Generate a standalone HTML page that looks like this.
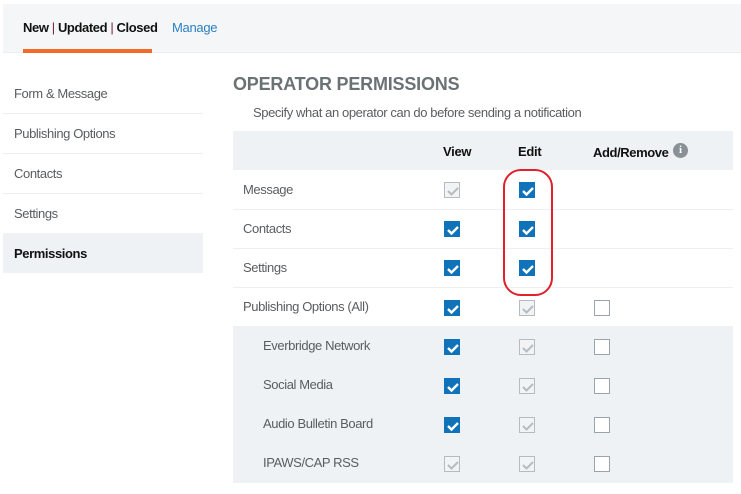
<!DOCTYPE html>
<html><head><style>
*{margin:0;padding:0;box-sizing:border-box}
body{width:741px;height:494px;background:#fff;font-family:"Liberation Sans",sans-serif;position:relative;overflow:hidden;color:#555}
.a{position:absolute;white-space:nowrap}
.t{font-size:13px;letter-spacing:-0.4px;color:#5a5d60}
.cb{position:absolute;width:16px;height:16px;border:1px solid #9aa4ab;background:#fff}
.cb.on{background:#1072b8;border-color:#1072b8}
.cb.dis{background:#f1f3f4;border-color:#b5bcc1}
.cb svg{position:absolute;left:2px;top:3px}
.sep{position:absolute;height:1px;background:#edf0f2}
</style></head><body>
<div class="a" style="left:3px;top:4px;width:738px;height:49px;background:#f5f6f7;border-bottom:1px solid #eceeef"></div>
<div class="a" style="left:23px;top:20px;font-size:13px;font-weight:bold;color:#111;letter-spacing:-0.4px">New <span style="font-weight:normal;color:#7a2040">|</span> Updated <span style="font-weight:normal;color:#7a2040">|</span> Closed</div>
<div class="a" style="left:23px;top:49px;width:129px;height:4px;background:#f26b2a"></div>
<div class="a" style="left:172px;top:20px;font-size:13px;color:#2a7fc0;letter-spacing:-0.3px">Manage</div>

<div class="a t" style="left:14px;top:86px">Form &amp; Message</div>
<div class="sep" style="left:3px;top:113px;width:200px"></div>
<div class="a t" style="left:14px;top:126px">Publishing Options</div>
<div class="sep" style="left:3px;top:153px;width:200px"></div>
<div class="a t" style="left:14px;top:166px">Contacts</div>
<div class="sep" style="left:3px;top:193px;width:200px"></div>
<div class="a t" style="left:14px;top:206px">Settings</div>
<div class="a" style="left:3px;top:233px;width:200px;height:40px;background:#eef2f5"></div>
<div class="a" style="left:14px;top:246px;font-size:13px;font-weight:bold;color:#111;letter-spacing:-0.4px">Permissions</div>

<div class="a" style="left:233px;top:74px;font-size:18px;font-weight:bold;color:#6b7275;letter-spacing:-0.2px">OPERATOR PERMISSIONS</div>
<div class="a t" style="left:253px;top:105px">Specify what an operator can do before sending a notification</div>

<div class="a" style="left:233px;top:131px;width:500px;height:39px;background:#eef2f5"></div>
<div class="a" style="left:443px;top:144px;font-size:13px;font-weight:bold;color:#111;letter-spacing:-0.3px">View</div>
<div class="a" style="left:518px;top:144px;font-size:13px;font-weight:bold;color:#111;letter-spacing:-0.3px">Edit</div>
<div class="a" style="left:593px;top:145px;font-size:13px;font-weight:bold;color:#111;letter-spacing:-0.4px">Add/Remove</div>
<div class="a" style="left:673px;top:143px;width:15px;height:15px;border-radius:50%;background:#8a9196;color:#fff;font-size:11px;font-weight:bold;text-align:center;line-height:15px;font-family:'Liberation Serif',serif">i</div>

<div class="sep" style="left:233px;top:209px;width:500px"></div>
<div class="sep" style="left:233px;top:248px;width:500px"></div>
<div class="sep" style="left:233px;top:287px;width:500px"></div>
<div class="a" style="left:233px;top:326px;width:500px;height:157px;background:#eef2f5"></div>

<div class="a t" style="left:243px;top:182px">Message</div>
<div class="a t" style="left:243px;top:221px">Contacts</div>
<div class="a t" style="left:243px;top:260px">Settings</div>
<div class="a t" style="left:243px;top:299px">Publishing Options (All)</div>
<div class="a t" style="left:263px;top:338px">Everbridge Network</div>
<div class="a t" style="left:263px;top:377px">Social Media</div>
<div class="a t" style="left:263px;top:416px">Audio Bulletin Board</div>
<div class="a t" style="left:263px;top:455px">IPAWS/CAP RSS</div>

<svg width="0" height="0" style="position:absolute"><defs>
<path id="w" d="M1 5 L4.5 8.5 L11 2" fill="none" stroke="#fff" stroke-width="2.4"/>
<path id="g" d="M1 5 L4.5 8.5 L11 2" fill="none" stroke="#b5bcc1" stroke-width="2"/>
</defs></svg>

<!-- row y: 182,221,260,299,338,377,416,455 -->
<div class="cb dis" style="left:444px;top:182px"><svg width="12" height="11"><use href="#g"/></svg></div>
<div class="cb on" style="left:519px;top:182px"><svg width="12" height="11"><use href="#w"/></svg></div>
<div class="cb on" style="left:444px;top:221px"><svg width="12" height="11"><use href="#w"/></svg></div>
<div class="cb on" style="left:519px;top:221px"><svg width="12" height="11"><use href="#w"/></svg></div>
<div class="cb on" style="left:444px;top:260px"><svg width="12" height="11"><use href="#w"/></svg></div>
<div class="cb on" style="left:519px;top:260px"><svg width="12" height="11"><use href="#w"/></svg></div>
<div class="cb on" style="left:444px;top:300px"><svg width="12" height="11"><use href="#w"/></svg></div>
<div class="cb dis" style="left:519px;top:300px"><svg width="12" height="11"><use href="#g"/></svg></div>
<div class="cb" style="left:594px;top:300px"></div>
<div class="cb on" style="left:444px;top:339px"><svg width="12" height="11"><use href="#w"/></svg></div>
<div class="cb dis" style="left:519px;top:339px"><svg width="12" height="11"><use href="#g"/></svg></div>
<div class="cb" style="left:594px;top:339px"></div>
<div class="cb on" style="left:444px;top:378px"><svg width="12" height="11"><use href="#w"/></svg></div>
<div class="cb dis" style="left:519px;top:378px"><svg width="12" height="11"><use href="#g"/></svg></div>
<div class="cb" style="left:594px;top:378px"></div>
<div class="cb on" style="left:444px;top:417px"><svg width="12" height="11"><use href="#w"/></svg></div>
<div class="cb dis" style="left:519px;top:417px"><svg width="12" height="11"><use href="#g"/></svg></div>
<div class="cb" style="left:594px;top:417px"></div>
<div class="cb dis" style="left:444px;top:456px"><svg width="12" height="11"><use href="#g"/></svg></div>
<div class="cb dis" style="left:519px;top:456px"><svg width="12" height="11"><use href="#g"/></svg></div>
<div class="cb" style="left:594px;top:456px"></div>

<div class="a" style="left:503px;top:169px;width:50px;height:127px;border:2px solid #e0202a;border-radius:18px"></div>
</body></html>
